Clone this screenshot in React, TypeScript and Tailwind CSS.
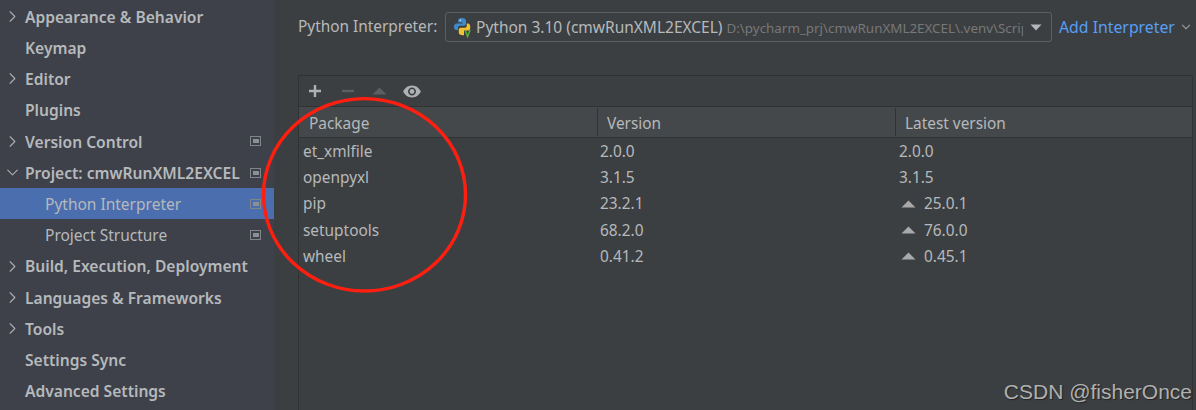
import { ChevronDown, ChevronRight } from "lucide-react";

const navItems = [
  { label: "Appearance & Behavior", arrow: "right", bold: true },
  { label: "Keymap", bold: true },
  { label: "Editor", arrow: "right", bold: true },
  { label: "Plugins", bold: true },
  { label: "Version Control", arrow: "right", bold: true, badge: true },
  { label: "Project: cmwRunXML2EXCEL", arrow: "down", bold: true, badge: true },
  { label: "Python Interpreter", child: true, badge: true, selected: true },
  { label: "Project Structure", child: true, badge: true },
  { label: "Build, Execution, Deployment", arrow: "right", bold: true },
  { label: "Languages & Frameworks", arrow: "right", bold: true },
  { label: "Tools", arrow: "right", bold: true },
  { label: "Settings Sync", bold: true },
  { label: "Advanced Settings", bold: true },
];

const packages = [
  { name: "et_xmlfile", version: "2.0.0", latest: "2.0.0" },
  { name: "openpyxl", version: "3.1.5", latest: "3.1.5" },
  { name: "pip", version: "23.2.1", latest: "25.0.1", upgrade: true },
  { name: "setuptools", version: "68.2.0", latest: "76.0.0", upgrade: true },
  { name: "wheel", version: "0.41.2", latest: "0.45.1", upgrade: true },
];

const ProjectBadge = () => (
  <span className="flex h-[10px] w-[11px] flex-col border border-[#80858a] px-[1.5px] py-[2px]">
    <span className="flex-1 bg-[#8a9196]" />
  </span>
);

const UpArrow = ({ className }: { className: string }) => (
  <svg width="15" height="8" viewBox="0 0 15 8" className={className}>
    <path d="M7.5 0.5 L14.5 7.5 L0.5 7.5 Z" fill="currentColor" />
  </svg>
);

const PythonIcon = () => (
  <svg width="20" height="21" viewBox="0 0 20 21" className="shrink-0">
    <path d="M9 1C5.8 1 5.2 2.2 5.2 3.6V5.6H9.4V6.4H3.4C1.9 6.4 1 7.7 1 9.7C1 11.8 1.9 13 3.4 13H5V11C5 9.6 6 8.7 7.3 8.7H11C12.1 8.7 13 7.8 13 6.7V3.6C13 2.1 11.5 1 9 1Z" fill="#3f8ac9" />
    <circle cx="7.2" cy="3.3" r="0.8" fill="#dfe8ef" />
    <path d="M13.8 6.4V8.4C13.8 9.8 12.8 10.7 11.5 10.7H7.8C6.7 10.7 5.8 11.6 5.8 12.7V15.8C5.8 17.3 7.3 18.2 10 18.2H11V13.6H15C16.4 13.6 17.3 12.2 17.3 10.2C17.3 7.8 16.3 6.4 15 6.4Z" fill="#f3c22f" />
    <path d="M12 12.8L14.6 19.6L17.2 12.8" fill="none" stroke="#5cab3a" strokeWidth="1.5" />
  </svg>
);

export default function App() {
  return (
    <div className="relative flex h-[410px] w-[1196px] overflow-hidden bg-[#3c3f41] font-['Noto_Sans',sans-serif] text-[#b6b9bc]">
      {/* settings tree */}
      <div className="flex w-[274px] shrink-0 flex-col bg-[#3e4149] pt-[1px]">
        {navItems.map((item) => (
          <div
            key={item.label}
            className={`relative flex h-[31.2px] shrink-0 items-center pr-[13px] ${
              item.selected ? "bg-[#4b6eaf]" : ""
            } ${item.child ? "pl-[45px] text-[15.5px] font-normal" : "pl-[25px] text-[15.6px] font-semibold"}`}
          >
            {item.arrow === "right" && (
              <ChevronRight size={19} strokeWidth={1.4} className="absolute left-[3px] text-[#a9adb1]" />
            )}
            {item.arrow === "down" && (
              <ChevronDown size={19} strokeWidth={1.4} className="absolute left-[3px] text-[#a9adb1]" />
            )}
            <span className="flex-1 whitespace-nowrap pt-[2px]">{item.label}</span>
            {item.badge && <ProjectBadge />}
          </div>
        ))}
      </div>

      {/* interpreter panel */}
      <div className="flex min-w-0 flex-1 flex-col pl-[24px] pr-[3px] pt-[12px]">
        <div className="flex h-[30px] items-center text-[15.4px]">
          <span className="w-[147px] shrink-0 whitespace-nowrap">Python Interpreter:</span>
          <div className="flex h-[30px] w-[607px] shrink-0 items-center rounded-[3px] border border-[#5e6060] pl-[7px] pr-[8px]">
            <PythonIcon />
            <span className="ml-[3px] shrink-0 whitespace-nowrap pt-[2px] text-[15.5px]">Python 3.10 (cmwRunXML2EXCEL)</span>
            <span className="ml-[4px] w-[296px] shrink-0 overflow-hidden whitespace-nowrap pt-[2px] text-[13.4px] text-[#787878]">
              D:\pycharm_prj\cmwRunXML2EXCEL\.venv\Scripts
            </span>
            <svg width="12" height="7" viewBox="0 0 12 7" className="ml-[7px] shrink-0 text-[#b4b8bc]">
              <path d="M0.5 0.5 H11.5 L6 6.5 Z" fill="currentColor" />
            </svg>
          </div>
          <span className="ml-[7px] whitespace-nowrap pt-[1px] text-[15.8px] text-[#589df6]">Add Interpreter</span>
          <ChevronDown size={14} strokeWidth={2.2} className="ml-[4px] text-[#8a8e92]" />
        </div>

        <div className="mt-[33px] flex flex-1 flex-col border border-b-0 border-[#323232]">
          <div className="flex h-[30px] shrink-0 items-center pl-[9px]">
            <svg width="14" height="14" viewBox="0 0 14 14" className="text-[#afb1b3]">
              <path d="M7 1V13M1 7H13" stroke="currentColor" strokeWidth="2.4" />
            </svg>
            <svg width="14" height="14" viewBox="0 0 14 14" className="ml-[19px] text-[#5c5f61]">
              <path d="M1 7H13" stroke="currentColor" strokeWidth="2.4" />
            </svg>
            <UpArrow className="ml-[17px] text-[#5c5f61]" />
            <svg width="18" height="13" viewBox="0 0 18 13" className="ml-[16px] text-[#afb1b3]">
              <path
                fillRule="evenodd"
                d="M9 0.5C4.8 0.5 1.6 3.4 0.2 6.5C1.6 9.6 4.8 12.5 9 12.5C13.2 12.5 16.4 9.6 17.8 6.5C16.4 3.4 13.2 0.5 9 0.5ZM9 2.5C11.2 2.5 13 4.3 13 6.5C13 8.7 11.2 10.5 9 10.5C6.8 10.5 5 8.7 5 6.5C5 4.3 6.8 2.5 9 2.5Z"
                fill="currentColor"
              />
              <circle cx="9" cy="6.5" r="2.4" fill="currentColor" />
            </svg>
          </div>
          <div className="grid h-[32px] shrink-0 grid-cols-[298px_298px_1fr] items-center border-y border-[#323232] bg-[#45484a] text-[15.4px]">
            <span className="pl-[10px] pt-[3px]">Package</span>
            <span className="flex h-[28px] items-center border-l border-[#323232] pl-[9px] pt-[3px]">Version</span>
            <span className="flex h-[28px] items-center border-l border-[#323232] pl-[9px] pt-[3px]">Latest version</span>
          </div>
          <div className="flex flex-col text-[15.4px]">
            {packages.map((pkg) => (
              <div key={pkg.name} className="grid h-[26.2px] grid-cols-[298px_298px_1fr] items-center">
                <span className="pl-[4px] pt-[1px]">{pkg.name}</span>
                <span className="pl-[3px] pt-[1px]">{pkg.version}</span>
                <span className="flex items-center pl-[4px] pt-[1px]">
                  {pkg.upgrade && <UpArrow className="mr-[8px] ml-[2px] text-[#a9a9a9]" />}
                  {pkg.latest}
                </span>
              </div>
            ))}
          </div>
        </div>
      </div>

      {/* hand-drawn annotation circle */}
      <svg width="220" height="210" viewBox="0 0 220 210" className="absolute left-[255px] top-[86px]">
        <ellipse cx="109.5" cy="108.8" rx="101" ry="96.2" fill="none" stroke="#ff1f10" strokeWidth="3.4" />
      </svg>

      <span className="absolute right-[4px] top-[376px] font-['Liberation_Sans',sans-serif] text-[21px] text-[#b0b0b0] [text-shadow:1px_1px_1px_#222]">
        CSDN @fisherOnce
      </span>
    </div>
  );
}
